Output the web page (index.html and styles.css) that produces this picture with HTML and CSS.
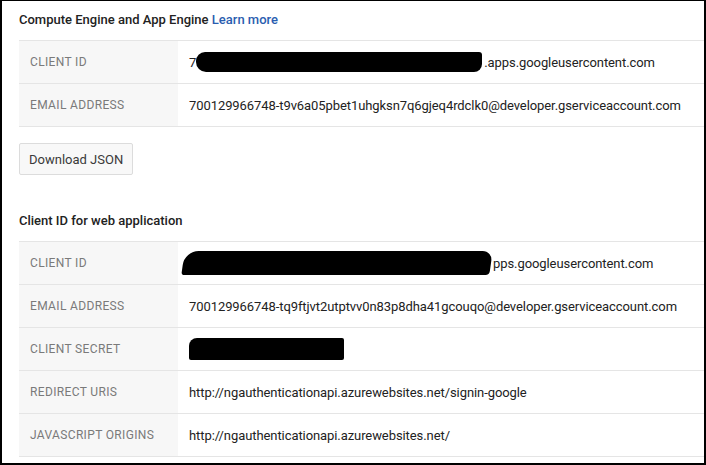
FILE: index.html
```html
<!DOCTYPE html>
<html>
<head>
<meta charset="utf-8">
<link rel="stylesheet" href="styles.css">
</head>
<body>
<div class="frame">
  <h2 class="section-title">Compute Engine and App Engine <a class="link" href="#">Learn more</a></h2>
  <div class="table">
    <div class="row">
      <div class="label">Client ID</div>
      <div class="value">7<span class="redact r1"></span>.apps.googleusercontent.com</div>
    </div>
    <div class="row">
      <div class="label">Email address</div>
      <div class="value">700129966748-t9v6a05pbet1uhgksn7q6gjeq4rdclk0@developer.gserviceaccount.com</div>
    </div>
  </div>
  <div class="actions">
    <button class="btn">Download JSON</button>
  </div>
  <h2 class="section-title second">Client ID for web application</h2>
  <div class="table">
    <div class="row">
      <div class="label">Client ID</div>
      <div class="value shift"><span class="redact r2"></span>pps.googleusercontent.com</div>
    </div>
    <div class="row">
      <div class="label">Email address</div>
      <div class="value">700129966748-tq9ftjvt2utptvv0n83p8dha41gcouqo@developer.gserviceaccount.com</div>
    </div>
    <div class="row">
      <div class="label">Client secret</div>
      <div class="value"><span class="redact r3"></span></div>
    </div>
    <div class="row">
      <div class="label">Redirect URIs</div>
      <div class="value">http://ngauthenticationapi.azurewebsites.net/signin-google</div>
    </div>
    <div class="row">
      <div class="label">Javascript origins</div>
      <div class="value">http://ngauthenticationapi.azurewebsites.net/</div>
    </div>
  </div>
</div>
</body>
</html>
```

FILE: styles.css
```css
* { box-sizing: border-box; }
html, body { margin: 0; padding: 0; background: #fff; }
body { font-family: Roboto, "Liberation Sans", Arial, sans-serif; color: #222; }

.frame {
  width: 706px;
  height: 465px;
  border-style: solid;
  border-color: #000;
  border-width: 1px 2px 2px 2px;
  padding: 10px 0 0 17px;
  overflow: hidden;
}

.section-title {
  margin: 0;
  font-size: 13px;
  font-weight: 500;
  line-height: 18px;
  color: #222;
}
.section-title.second { margin-top: 37px; }

.link { color: #2a5db0; text-decoration: none; }

.table {
  margin-top: 11px;
  border-top: 1px solid #e5e5e5;
}
.row {
  display: flex;
  height: 43px;
  border-bottom: 1px solid #e5e5e5;
}
.label {
  width: 159px;
  flex: none;
  background: #f7f7f7;
  padding-left: 11px;
  display: flex;
  align-items: center;
  font-size: 12px;
  color: #7a7a7a;
  text-transform: uppercase;
  letter-spacing: 0.35px;
}
.value {
  flex: 1;
  padding-left: 11px;
  display: flex;
  align-items: center;
  font-size: 13px;
  color: #222;
  letter-spacing: -0.08px;
  white-space: nowrap;
}
.value.shift { padding-left: 5px; }

.redact {
  display: inline-block;
  background: #000;
}
.r1 { width: 286px; height: 20px; border-radius: 9px 3px 8px 10px; margin: 0 2px 0 0; }
.r2 { width: 308px; height: 24px; border-radius: 14px 10px 4px 3px; margin-right: 2px; transform: skewX(-8deg); }
.r3 { width: 155px; height: 22px; border-radius: 8px 2px 2px 2px; }

.actions { margin-top: 16px; }
.btn {
  font-family: inherit;
  font-size: 13px;
  color: #3a3a3a;
  background: #f8f8f8;
  border: 1px solid #dcdcdc;
  border-radius: 2px;
  height: 32px;
  padding: 0 9px;
  margin: 0;
  cursor: pointer;
}
```
